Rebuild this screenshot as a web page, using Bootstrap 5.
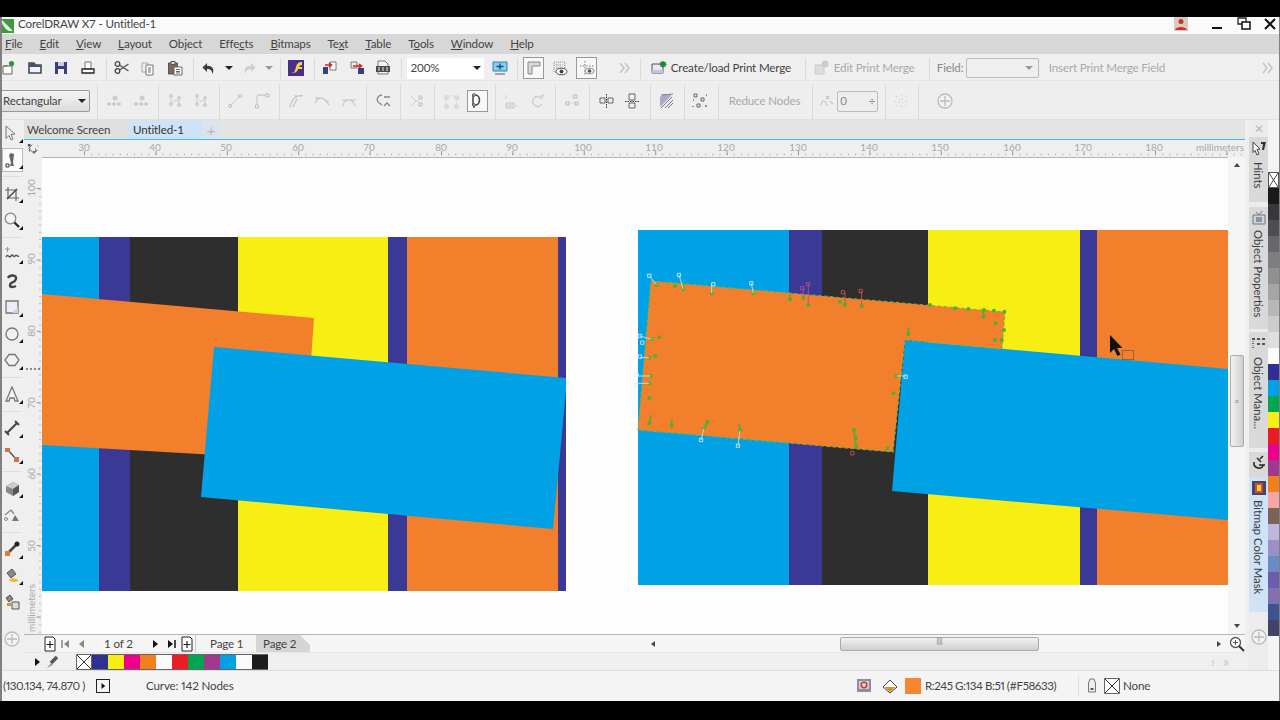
<!DOCTYPE html>
<html lang="en">
<head>
<meta charset="utf-8">
<title>CorelDRAW X7 - Untitled-1</title>
<link href="https://cdn.jsdelivr.net/npm/bootstrap@5.3.0/dist/css/bootstrap.min.css" rel="stylesheet">
<style>
html,body{margin:0;height:100%;background:#000;overflow:hidden}
body{font-family:Lato,"Liberation Sans",sans-serif;font-size:11.6px;letter-spacing:-.15px;color:#4a4a4a;line-height:1}
.cd-app{width:1280px;height:720px;background:#000}
.cd-black-top{height:17px;background:#000}
.cd-black-bot{height:19px;background:#000}
.cd-shell{position:relative}
.cd-shell::before{content:"";position:absolute;left:0;top:0;bottom:0;width:2px;background:#808080;z-index:2}
.cd-shell::after{content:"";position:absolute;right:0;top:0;bottom:0;width:1px;background:#808080;z-index:2}
.cd-title{height:17px;background:#fafafa;padding-bottom:3px}
.cd-logo{width:14px;height:14px;flex:none;display:block;margin-top:3px}
.cd-title-text{margin-left:4px;color:#444}
.cd-winbtns{padding-right:2px}
.cd-win-user{margin-right:20px}
.cd-win-min{margin-right:11px}
.cd-win-max{margin-right:10px}
.cd-menu{height:20px;background:#d7d7d7;gap:17px;padding-left:5px;color:#444}
.cd-toolbar{height:27px;background:#efefef;border-bottom:1px solid #e4e4e4;padding-top:2px}
.cd-prop{height:39px;background:#eeeeee;border-bottom:1px solid #e0e0e0;padding-top:2px}
.cd-slot{width:26.5px;height:24px;flex:none;display:flex;align-items:center;justify-content:center}
.cd-slot-first{width:21.5px;justify-content:flex-start}
.cd-slot-drop{width:13.5px}
.cd-pressed{position:relative}
.cd-pressed::before{content:"";position:absolute;left:3px;right:2.5px;top:1px;bottom:1px;border:1px solid #999;background:#f8f8f8}
.cd-pressed svg{position:relative}
.cd-ic{width:16px;height:16px;display:block}
.cd-sep{width:1px;height:100%;background:#dadada;margin:0 2px 0 4.5px;flex:none}
.cd-toolbar .cd-sep{height:21px}
.cd-prop .cd-sep{height:35px}
.cd-combo{width:77px;height:21px;background:#fff;border-radius:2px;margin-left:2.5px;display:flex;align-items:center;padding:0 3px 0 4px;justify-content:space-between;color:#444;flex:none}
.cd-caret{width:0;height:0;border-left:4px solid transparent;border-right:4px solid transparent;border-top:4px solid #222;flex:none}
.cd-caret-off{border-top-color:#999}
.cd-ml-zoom{margin-left:2.75px}
.cd-ml-more{margin-left:11.5px}
.cd-sep-tight{margin-left:2px;margin-right:10px}
.cd-create{width:16px;margin-right:4px;flex:none}
.cd-btn-text{white-space:nowrap;flex:none;color:#444}
.cd-create-text{width:120px}
.cd-off{color:#a9a9a9}
.cd-edit-ic{margin-right:4px;flex:none}
.cd-edit-text{width:81px}
.cd-sep-edit{margin-left:14px;margin-right:7px}
.cd-sep-edit2{margin-right:8px}
.cd-field{width:29px;color:#888}
.cd-fieldbox{width:73px;height:20px;border:1px solid #bbb;border-radius:2px;margin-right:10px;display:flex;align-items:center;justify-content:flex-end;padding-right:5px;flex:none}
.cd-field-text{width:206px}
.cd-shape-combo{width:90px;height:22px;background:linear-gradient(#f5f5f5,#dcdcdc);border:1px solid #9a9a9a;border-left:0;border-radius:2px;display:flex;align-items:center;justify-content:space-between;padding:0 3px 0 3px;color:#444;flex:none}
.cd-sep-first{margin-left:7px;margin-right:2.75px}
.cd-reduce{width:71px;margin-left:8px}
.cd-sep-red{margin-left:12px;margin-right:0}
.cd-spin{width:41px;height:21px;border:1px solid #bbb;border-radius:2px;display:flex;align-items:center;justify-content:space-between;padding:0 2px 0 2px;color:#888;flex:none;margin-left:-2px}
.cd-sep-spin{margin-left:7px;margin-right:1px}
.cd-plus-slot{margin-left:10px}
.cd-tools{width:24px;background:#efefef;flex:none}
.cd-tool{height:26.5px;flex:none;display:flex;align-items:center;justify-content:center;position:relative;padding:0 2px 0 2px}
.cd-corner::after{content:"";position:absolute;right:1px;bottom:4px;border-left:4px solid transparent;border-bottom:4px solid #111}
.cd-tool-on::before{content:"";position:absolute;left:2px;right:1px;top:1px;bottom:1px;border:1px solid #bbb;background:#fbfbfb}
.cd-tool svg{position:relative}
.cd-hsep{height:1px;background:#ddd;margin:3px 2px 3.5px 2px;flex:none}
.cd-tool-gap{height:10px;flex:none}
.cd-main{width:1225px;flex:none;background:#efefef}
.cd-tabs{height:20px;background:#e4e4e4;border-bottom:1px solid #3cc0dc;margin-right:4px;flex:none}
.cd-tab-a{width:105px;padding-left:3px;color:#444;background:#e0e0e0}
.cd-tab-b{width:73px;padding-left:4px;background:#cfe3f8;color:#333}
.cd-tab-c{width:18px;background:#dbe4ee;color:#bbb;font-size:16px;justify-content:center}
.cd-ruler-row{height:17px;flex:none}
.cd-ruler-svg{display:block}
.cd-rtext{font-family:Lato,"Liberation Sans",sans-serif;font-size:10px;letter-spacing:0;fill:#a8a8a8}
.cd-canvas-row{height:477px;flex:none}
.cd-vruler{width:18px;flex:none;background:#efefef}
.cd-canvas{width:1186px;flex:none;background:#fdfdfd;border-top:1px solid #b5b5b5;overflow:hidden}
.cd-canvas svg{display:block}
.cd-vscroll{width:17px;flex:none;background:#f5f5f5;padding:6px 0}
.cd-arrow-u{width:0;height:0;border-left:3.5px solid transparent;border-right:3.5px solid transparent;border-bottom:4px solid #444}
.cd-arrow-d{width:0;height:0;border-left:3.5px solid transparent;border-right:3.5px solid transparent;border-top:4px solid #444}
.cd-vthumb{width:14px;height:92px;margin:188px 0 177px 0;background:linear-gradient(90deg,#f2f2f2,#cfcfcf);border:1px solid #aaa;border-radius:2px;color:#777;font-size:7px}
.cd-page-row{height:18px;flex:none;background:#f5f5f5;border-top:1px solid #b5b5b5;margin-right:4px}
.cd-pg-left{width:18px;background:#efefef;flex:none;color:#aaa;height:100%}
.cd-pg-ic{width:16px;height:16px;flex:none;display:flex;align-items:center;justify-content:center}
.cd-pg-count{width:57px;text-align:center;color:#444;flex:none}
.cd-pg-tab{height:17px;display:flex;align-items:center;flex:none;color:#444;padding-left:14px}
.cd-pg-t1{width:61px;background:#f4f4f4;border-left:1px solid #ccc;clip-path:polygon(0 0,86% 0,100% 60%,100% 100%,0 100%)}
.cd-pg-t2{width:54px;background:#d5d5d5;padding-left:7px;clip-path:polygon(0 0,82% 0,100% 60%,100% 100%,0 100%)}
.cd-hscroll{flex:1 1 auto;height:100%;background:#f5f5f5;padding-left:341px}
.cd-arrow-l{width:0;height:0;border-top:3.5px solid transparent;border-bottom:3.5px solid transparent;border-right:4px solid #444;flex:none}
.cd-arrow-r{width:0;height:0;border-top:3.5px solid transparent;border-bottom:3.5px solid transparent;border-left:4px solid #444;flex:none}
.cd-hthumb{width:199px;height:14px;flex:none;background:linear-gradient(#f2f2f2,#cfcfcf);border:1px solid #aaa;border-radius:2px;color:#777;font-size:7px;text-align:center;margin-left:185px;margin-right:178px}
.cd-zoom-btn{margin-left:8px;flex:none}
.cd-pal-row{height:18px;flex:none;margin-right:4px;background:#efefef;border-top:1px solid #e6e6e6}
.cd-pal-head{width:52px;flex:none;padding-left:5px;gap:0}
.cd-sw{width:16px;height:16px;flex:none;border-top:1px solid #666;border-bottom:1px solid #666}
.cd-pal-fill{flex:1 1 auto;justify-content:flex-end;padding-right:16px;gap:8px}
.cd-chev{color:#c8c8c8;font-size:15px}
.cd-c1{background:#2e3192}.cd-c2{background:#f7ee14}.cd-c3{background:#ec008c}.cd-c4{background:#f17f1c}.cd-c5{background:#fafafa}.cd-c6{background:#ed1c24}.cd-c7{background:#00a651}.cd-c8{background:#a3398e}.cd-c9{background:#00a2e5}.cd-c10{background:#fafafa}.cd-c11{background:#1c1c1e}
.cd-dock{width:19px;flex:none;background:#ececec}
.cd-dock-x{height:17px;flex:none;color:#bbb;font-size:12px}
.cd-dtab{flex:none;writing-mode:vertical-rl;background:#d9d9d9;color:#3b3b3b;font-size:11.3px;letter-spacing:0;display:flex;flex-direction:row;align-items:center;padding-top:3px;gap:4px;white-space:nowrap}
.cd-dtab svg{writing-mode:horizontal-tb}
.cd-dt1{height:65px;gap:6px}
.cd-dt2{height:122px;margin-top:5px}
.cd-dt3{height:116px;margin-top:3px;gap:6px}
.cd-dt4{height:25px;margin-top:4px}
.cd-dt5{height:135px;background:#cfe2f6}
.cd-dock-plus{margin-top:17px}
.cd-pal{width:11px;flex:none;background:#f4f4f4}
.cd-pal-top{height:52px;flex:none}
.cd-pc{height:16px;flex:none;display:block}
.cd-g1{background:#1a1a1c}.cd-g2{background:#38383c}.cd-g3{background:#4c4e52}.cd-g4{background:#66686c}.cd-g5{background:#7c7e80}.cd-g6{background:#8e9092}.cd-g7{background:#a4a6a6}.cd-g8{background:#b6b8b8}.cd-g9{background:#cbcccc}.cd-g10{background:#dedede}.cd-g11{background:#fbfbfb}.cd-g12{background:#2e3192}
.cd-h1{background:#00a2e5}.cd-h2{background:#00a651}.cd-h3{background:#f7ee14}.cd-h4{background:#ed1c24}.cd-h5{background:#ec008c}.cd-h6{background:#a3398e}.cd-h7{background:#f17f1c}.cd-h8{background:#f4a5a5}.cd-h9{background:#7d6357}.cd-h10{background:#bfb6dc}.cd-h11{background:#9a8fc8}.cd-h12{background:#6a8cc4}.cd-h13{background:#6c5cae}.cd-h14{background:#8470b0}.cd-h15{background:#3c5590}.cd-h16{background:#43436a}
.cd-status{height:31px;background:#f4f4f4;border-top:1px solid #dcdcdc;color:#444;padding-left:3px;white-space:nowrap}
.cd-coords{width:93px;flex:none;letter-spacing:-.45px;font-variant-numeric:proportional-nums}
.cd-playbox{width:14px;height:14px;border:1px solid #222;display:flex;align-items:center;justify-content:center;flex:none;margin-right:36px}
.cd-curve{width:100px;flex:none;margin-right:610px;font-variant-numeric:proportional-nums}
.cd-st-ic{flex:none}
.cd-fillic{margin-left:10px;margin-right:7px}
.cd-orange{width:16px;height:16px;background:#f58633;flex:none;margin-right:4px}
.cd-rgb{width:131px;flex:none;letter-spacing:-.45px;font-variant-numeric:proportional-nums}
.cd-st-sep{width:1px;height:20px;background:#ddd;margin:0 5px 0 22px;flex:none}
.cd-xbox{width:16px;height:16px;margin:0 3px 0 4px;flex:none;display:block}
</style>
</head>
<body>
<svg width="0" height="0" class="d-none">
<defs>
<symbol id="x-new" viewBox="0 0 16 16"><path d="M3 6h9v8H3z" fill="#fff" stroke="#666"/><path d="M3 6h4v-1" fill="none" stroke="#666"/><circle cx="11.5" cy="3.5" r="2.6" fill="#1f9d3a"/></symbol>
<symbol id="x-open" viewBox="0 0 16 16"><path d="M2 3h5l1.500 2H14v8H2z" fill="#f2f2f2" stroke="#3f4a5e" stroke-width="1.600"/><path d="M2 3h5l1.500 2H14v2H2z" fill="#46536b"/></symbol>
<symbol id="x-save" viewBox="0 0 16 16"><path d="M2 2h12v12H2z" fill="#3a3f7c"/><path d="M5 2h6v4H5z" fill="#c9cbdc"/><path d="M5 9h6v5H5z" fill="#eef"/></symbol>
<symbol id="x-print" viewBox="0 0 16 16"><path d="M5 2h6v7H5z" fill="#fff" stroke="#777"/><path d="M2 9h12v4H2z" fill="#fff" stroke="#222" stroke-width="1.300"/></symbol>
<symbol id="x-cut" viewBox="0 0 16 16"><circle cx="3.500" cy="4" r="2.300" fill="none" stroke="#444" stroke-width="1.300"/><circle cx="3.500" cy="11" r="2.300" fill="none" stroke="#444" stroke-width="1.300"/><path d="M5.500 5l9 6M5.500 10l9-6" stroke="#555" stroke-width="1.400"/></symbol>
<symbol id="x-copy" viewBox="0 0 16 16"><path d="M2 3h6v9H2z" fill="#eee" stroke="#aaa"/><path d="M6 5h7v10H6z" fill="#fff" stroke="#777"/><path d="M8 8h3M8 10h3M8 12h3" stroke="#666"/></symbol>
<symbol id="x-paste" viewBox="0 0 16 16"><path d="M1.500 3h9v11h-9z" fill="#7d6a55" stroke="#555"/><path d="M4 1.500h4v3H4z" fill="#ddd" stroke="#555"/><path d="M7 7h8v8H7z" fill="#fff" stroke="#666"/><path d="M9 9.500h4M9 11.500h4M9 13h4" stroke="#666"/></symbol>
<symbol id="x-undo" viewBox="0 0 16 16"><path d="M6 3L1.500 7.500 6 12V9c3 0 5 1 5.500 5C13.500 10 12 5.500 6 5.800z" fill="#3c3c3c"/></symbol>
<symbol id="x-redo" viewBox="0 0 16 16"><path d="M10 3l4.500 4.500L10 12V9c-3 0-5 1-5.500 5C2.500 10 4 5.500 10 5.800z" fill="#d0d0d0"/></symbol>
<symbol id="x-app" viewBox="0 0 16 16"><path d="M0 0h16v16H0z" fill="#4a2f8a"/><path d="M3 13c4 0 4-3 5-6 1-3 2-5 6-5v3c-2 0-2.500 1-3 2h3v2h-4c-1 3-2 4-7 4z" fill="#f3d64a"/></symbol>
<symbol id="x-imp" viewBox="0 0 16 16"><path d="M8 2h6v8H8z" fill="#fff" stroke="#777"/><path d="M1 7h5v7H1z" fill="#3a3f7c"/><path d="M3 5h6M7 3l2.500 2L7 7" stroke="#d22" stroke-width="1.600" fill="none"/></symbol>
<symbol id="x-exp" viewBox="0 0 16 16"><path d="M2 2h6v6H2z" fill="#eee" stroke="#777"/><path d="M9 8h6v6H9z" fill="#3a3f7c"/><path d="M4 6h8M10 4l2.500 2L10 8" stroke="#d22" stroke-width="1.600" fill="none"/></symbol>
<symbol id="x-pdf" viewBox="0 0 16 16"><path d="M3 1h7l3 3v10H3z" fill="#f4f4f4" stroke="#777"/><path d="M1 6h14v6H1z" fill="#4c4c4c"/><path d="M3 8h2M7 8h2M11 8h2M3 10h2M7 10h2M11 10h2" stroke="#eee"/></symbol>
<symbol id="x-fit" viewBox="0 0 16 16"><path d="M1 2h14v9H1z" fill="#7fd0ee" stroke="#3b7ea6"/><path d="M3 14h10" stroke="#889" stroke-width="1.500"/><path d="M8 3.500v6M4.500 6.500h7" stroke="#1a4d7a" stroke-width="1.300"/></symbol>
<symbol id="x-rul" viewBox="0 0 16 16"><path d="M2 2h12v4H6v8H2z" fill="#d9d9d9" stroke="#888"/></symbol>
<symbol id="x-grid" viewBox="0 0 16 16"><path d="M2 2h11v10H2z" fill="none" stroke="#999" stroke-dasharray="1 1"/><path d="M2 5h11M2 8h11M5 2v10M8 2v10" stroke="#aaa" stroke-dasharray="1 1"/><ellipse cx="9.500" cy="11.500" rx="5.500" ry="3.300" fill="#fff" stroke="#444"/><circle cx="9.500" cy="11.500" r="2" fill="#444"/></symbol>
<symbol id="x-guide" viewBox="0 0 16 16"><path d="M6 1v14M1 6h14" stroke="#777" stroke-dasharray="1.500 1.500"/><ellipse cx="10.500" cy="11" rx="4.500" ry="2.800" fill="#eee" stroke="#888"/><circle cx="10.500" cy="11" r="1.800" fill="#555"/></symbol>
<symbol id="x-more" viewBox="0 0 16 16"><path d="M3 3l4 5-4 5M8 3l4 5-4 5" fill="none" stroke="#c4c4c4" stroke-width="1.500"/></symbol>
<symbol id="x-create" viewBox="0 0 16 16"><path d="M1 4h11v9H1z" fill="#e9e6f4" stroke="#555"/><path d="M1 10h11v3H1z" fill="#c8c3de"/><path d="M12 .500l1 1.500 1.800-.5-.3 1.800 1.500 1-1.500 1 .3 1.800-1.800-.5-1 1.500-1-1.500-1.800.5.300-1.800-1.500-1 1.500-1-.3-1.800 1.800.5z" fill="#1b8a34"/></symbol>
<symbol id="x-edit" viewBox="0 0 16 16"><path d="M1 5h9v9H1z" fill="#ddd" stroke="#ccc"/><circle cx="11" cy="4" r="3.500" fill="#ccc"/></symbol>
<symbol id="x-n1" viewBox="0 0 16 16"><circle cx="9" cy="5" r="2.500" fill="#ccc"/><path d="M1 11h14" stroke="#ccc" stroke-dasharray="1.500 1.500"/><circle cx="3" cy="11" r="1.200" fill="none" stroke="#bbb"/><circle cx="8" cy="11" r="1.200" fill="none" stroke="#bbb"/><circle cx="13" cy="11" r="1.200" fill="none" stroke="#bbb"/></symbol>
<symbol id="x-n2" viewBox="0 0 16 16"><path d="M4 1v13M12 3v11M6 8h5" stroke="#ccc"/><circle cx="4" cy="3" r="1.300" fill="#f5f5f5" stroke="#bbb"/><circle cx="4" cy="11" r="1.300" fill="#f5f5f5" stroke="#bbb"/><circle cx="12" cy="5" r="1.300" fill="#f5f5f5" stroke="#bbb"/><circle cx="12" cy="12" r="1.300" fill="#f5f5f5" stroke="#bbb"/></symbol>
<symbol id="x-n3" viewBox="0 0 16 16"><path d="M3 13L13 3" stroke="#ccc"/><circle cx="3" cy="13" r="1.500" fill="#f5f5f5" stroke="#bbb"/><circle cx="13" cy="3" r="1.500" fill="#f5f5f5" stroke="#bbb"/></symbol>
<symbol id="x-n4" viewBox="0 0 16 16"><path d="M3 14V4c0-1 1-2 2-2h10" fill="none" stroke="#ccc" stroke-width="1.300"/><path d="M1.500 12h3v3h-3zM12 1h3v3h-3z" fill="#f5f5f5" stroke="#bbb"/></symbol>
<symbol id="x-n5" viewBox="0 0 16 16"><path d="M2 14C4 6 7 3 14 2M6 3h9M9 6l-4 8" fill="none" stroke="#c4c4c4" stroke-width="1.200"/></symbol>
<symbol id="x-n6" viewBox="0 0 16 16"><path d="M1 10C5 2 10 4 15 12M1 5h4M11 8h4" fill="none" stroke="#c4c4c4" stroke-width="1.200"/></symbol>
<symbol id="x-n7" viewBox="0 0 16 16"><path d="M2 13C3 5 12 5 14 13M1 7h14" fill="none" stroke="#c4c4c4" stroke-width="1.200"/></symbol>
<symbol id="x-n8" viewBox="0 0 16 16"><path d="M7 2C3 2 1 6 3 9l4 3M9 13l3-3 3 3M9 4h6" fill="none" stroke="#888" stroke-width="1.300"/></symbol>
<symbol id="x-n9" viewBox="0 0 16 16"><path d="M2 3l5 5-5 5M7 8h3" stroke="#ccc" fill="none"/><path d="M10 3h3v3h-3zM10 10h3v3h-3z" fill="none" stroke="#bbb"/></symbol>
<symbol id="x-n10" viewBox="0 0 16 16"><path d="M2 3h3v3H2zM12 3h3v3h-3zM2 12h3v3H2zM12 12h3v3h-3z" fill="#e9e9e9" stroke="#ccc"/><path d="M3 6v6M6 3h5M14 6v6" stroke="#ccc" stroke-dasharray="1 1"/></symbol>
<symbol id="x-n11" viewBox="0 0 16 16"><path d="M4 2h2c6 0 6 10 0 10H4z M5 12v3" fill="none" stroke="#444" stroke-width="1.500"/><circle cx="5" cy="2" r="1.300" fill="#fff" stroke="#444"/><circle cx="5" cy="12" r="1.300" fill="#fff" stroke="#444"/></symbol>
<symbol id="x-n12" viewBox="0 0 16 16"><path d="M3 2v4M3 10h8v5H3z" fill="#ddd" stroke="#ccc"/><path d="M12 13h3" stroke="#ccc"/></symbol>
<symbol id="x-n13" viewBox="0 0 16 16"><path d="M12 6a5 5 0 1 0 0 5" fill="none" stroke="#ccc" stroke-width="1.400"/><path d="M10 3l4-2-1 4z" fill="#ccc"/></symbol>
<symbol id="x-n14" viewBox="0 0 16 16"><path d="M9 1v6M1 10h14" stroke="#ccc" stroke-dasharray="1.500 1.500"/><path d="M10 2h3v3h-3zM2 9h3v3H2zM11 9h3v3h-3z" fill="none" stroke="#bbb"/></symbol>
<symbol id="x-n15" viewBox="0 0 16 16"><path d="M2 5h5v5H2zM10 5h5v5h-5z" fill="none" stroke="#666"/><path d="M8.500 1v14" stroke="#333" stroke-dasharray="1.500 1"/></symbol>
<symbol id="x-n16" viewBox="0 0 16 16"><path d="M5 1h6v6H5zM5 10h6v5H5z" fill="none" stroke="#666"/><path d="M1 8.500h14" stroke="#333" stroke-dasharray="1.500 1"/></symbol>
<symbol id="x-n17" viewBox="0 0 16 16"><path d="M4 1h9v2l-11 11V4z" fill="#a9a9c9"/><path d="M14 4L3 15M15 7l-8 8M15 10l-5 5" stroke="#777"/><path d="M4 2l11-1" stroke="#888"/></symbol>
<symbol id="x-n18" viewBox="0 0 16 16"><path d="M2 1h3v3H2zM9 5h3v3H9zM5 11h3v3H5z" fill="none" stroke="#666"/><path d="M1 7h1M14 2h1M14 12v2M1 13v1" stroke="#333"/></symbol>
<symbol id="x-n19" viewBox="0 0 16 16"><path d="M2 12c3-1 1-4 4-4s1 5 4 4M8 3l3 3M11 3L8 6M12 8l3 3" fill="none" stroke="#c4c4c4" stroke-width="1.100"/></symbol>
<symbol id="x-n20" viewBox="0 0 16 16"><g fill="#c8c8c8"><path d="M6 6h1v1H6zM9 6h1v1H9zM6 9h1v1H6zM9 9h1v1H9zM3 3h1v1H3zM8 2h1v1H8zM12 3h1v1h-1zM2 8h1v1H2zM13 8h1v1h-1zM3 12h1v1H3zM8 13h1v1H8zM12 12h1v1h-1z"/></g></symbol>
<symbol id="x-plus" viewBox="0 0 16 16"><circle cx="8" cy="8" r="7" fill="#f3f3f3" stroke="#bbb" stroke-width="1.300"/><path d="M8 3v10M3 8h10" stroke="#bbb" stroke-width="1.300"/></symbol>
<symbol id="x-pick" viewBox="0 0 16 16"><path d="M2 1l9 8-4 .5L9 14l-2 1-2-4.500-3 3z" fill="#eee" stroke="#777"/></symbol>
<symbol id="x-shape" viewBox="0 0 16 16"><path d="M7 1l3 1-1 9 1 3H6l1-3-2-8z" fill="#666"/><path d="M2 12h3v3H2z" fill="#fff" stroke="#333"/></symbol>
<symbol id="x-crop" viewBox="0 0 16 16"><path d="M4 1v11h11M1 4h11v11" fill="none" stroke="#666" stroke-width="1.200"/><path d="M3 13L13 3" stroke="#444" stroke-width="1.500"/></symbol>
<symbol id="x-zoom" viewBox="0 0 16 16"><circle cx="6.500" cy="6.500" r="5.300" fill="#f5f5f5" stroke="#888" stroke-width="1.300"/><path d="M10.500 10.500l4.500 4.500" stroke="#222" stroke-width="2.200"/></symbol>
<symbol id="x-free" viewBox="0 0 16 16"><path d="M1 3h5M3.500 1v5" stroke="#999"/><path d="M2 11c2-4 3 2 5-1s2 2 4 0 2 1 4 0" fill="none" stroke="#555" stroke-width="1.500"/></symbol>
<symbol id="x-art" viewBox="0 0 16 16"><path d="M4 5c2-4 9-3 8 1s-6 3-6 6 4 2 6 1" fill="none" stroke="#444" stroke-width="2.400"/></symbol>
<symbol id="x-rect" viewBox="0 0 16 16"><path d="M2 2h12v12H2z" fill="#ededf5" stroke="#777" stroke-width="1.300"/><path d="M8 14h6V8z" fill="#cfcfe0"/></symbol>
<symbol id="x-ell" viewBox="0 0 16 16"><circle cx="8" cy="8" r="6" fill="#f0f0f6" stroke="#777" stroke-width="1.300"/></symbol>
<symbol id="x-poly" viewBox="0 0 16 16"><path d="M5 2.500h6L15 8l-4 5.500H5L1 8z" fill="#f0f0f6" stroke="#777" stroke-width="1.300"/></symbol>
<symbol id="x-text" viewBox="0 0 16 16"><path d="M8 1L2 15h3l1-3h4l1 3h3z" fill="#f4f4f4" stroke="#777" stroke-width="1.300"/></symbol>
<symbol id="x-dim" viewBox="0 0 16 16"><path d="M3 13L13 3" stroke="#444" stroke-width="2"/><path d="M1 11l4 4M11 1l4 4" stroke="#444" stroke-width="1.800"/></symbol>
<symbol id="x-conn" viewBox="0 0 16 16"><path d="M4 3l8 9" stroke="#555" stroke-width="1.500"/><path d="M1 1h5v4H1z" fill="#d4704a"/><path d="M10 10h5v5h-5z" fill="#d4704a"/></symbol>
<symbol id="x-shadow" viewBox="0 0 16 16"><path d="M2 5l7-4 6 3v7l-6 4-7-4z" fill="#888"/><path d="M2 5l7 3 6-4-6-3z" fill="#ccc"/><path d="M9 8v7l6-4V4z" fill="#555"/></symbol>
<symbol id="x-trans" viewBox="0 0 16 16"><path d="M1 8l6-5M7 3l3 4" stroke="#888" stroke-width="1.300" fill="none"/><circle cx="2" cy="12" r="1.500" fill="none" stroke="#888"/><path d="M8 14l3-6 4 6z" fill="#777"/></symbol>
<symbol id="x-drop" viewBox="0 0 16 16"><path d="M13 3L5 11" stroke="#444" stroke-width="2.500"/><circle cx="13" cy="3" r="2.500" fill="#222"/><path d="M1 10h5v5H1z" fill="#d9822b"/></symbol>
<symbol id="x-fill" viewBox="0 0 16 16"><path d="M3 5l5-4 4 5-5 4z" fill="#888" stroke="#555"/><path d="M5 12c2-2 7-2 9 0s-7 3-9 0z" fill="#f2b632"/></symbol>
<symbol id="x-smart" viewBox="0 0 16 16"><path d="M2 4l4-3 3 4-4 3z" fill="#888" stroke="#555"/><path d="M3 9h4v3H3z" fill="#e08a2c"/><path d="M8 8h7v7H8z" fill="#ddd" stroke="#555"/></symbol>
<symbol id="x-corner" viewBox="0 0 16 16"><path d="M3 6v4M10 6v4M6 2l-4 4 6 6 4-4M12 3l1 1" stroke="#555" fill="none"/><path d="M1 1h3v3H1zM7 9h2v2H7z" fill="#555"/></symbol>
<symbol id="x-hint" viewBox="0 0 16 16"><path d="M2 2l7 7-3 .5 2 4.500-2 1-2-4.500-2 2z" fill="#f3f3f3" stroke="#444"/><path d="M10 2h5l-2 8h-2l1-6h-2z" fill="#333"/></symbol>
<symbol id="x-props" viewBox="0 0 16 16"><path d="M2 5h12v9H2z" fill="#cfd4da" stroke="#777"/><path d="M5 2l3 3 3-4" stroke="#777" fill="none"/><path d="M5 7h6v5H5z" fill="#8a93a0"/></symbol>
<symbol id="x-mana" viewBox="0 0 16 16"><path d="M1 3h3v2H1zM6 3h3v2H6zM11 3h3v2h-3zM6 8h3v2H6zM11 8h3v2h-3zM1 8h2v1H1zM1 12h2v1H1z" fill="#555"/><path d="M2 6v8" stroke="#777" stroke-dasharray="1 1"/></symbol>
<symbol id="x-grab" viewBox="0 0 16 16"><path d="M3 7c-1 7 9 8 9 3M6 3l4 4M12 1l-3 3M8 10h6" fill="none" stroke="#222" stroke-width="1.500"/></symbol>
<symbol id="x-mask" viewBox="0 0 16 16"><path d="M1 1h14v14H1z" fill="#3c4a6e"/><path d="M4 3h8v10H4z" fill="#d9482b"/><path d="M6 5h4v6H6z" fill="#f6dc3a"/></symbol>
<symbol id="x-eye" viewBox="0 0 16 16"><path d="M12 3L6 9" stroke="#555" stroke-width="3.500"/><path d="M2 14l4-5 2 2z" fill="#999"/></symbol>
<symbol id="x-zplus" viewBox="0 0 16 16"><circle cx="6.500" cy="6.500" r="5" fill="#fff" stroke="#555" stroke-width="1.300"/><path d="M4 6.500h5M6.500 4v5" stroke="#555"/><path d="M10 10l5 5" stroke="#333" stroke-width="2"/></symbol>
<symbol id="x-screen" viewBox="0 0 16 16"><path d="M1 1h14v13H1z" fill="#8b8fa1"/><path d="M3 3h10v8H3z" fill="#d5c9cf"/><circle cx="8" cy="7" r="2.800" fill="none" stroke="#c33" stroke-width="1.300"/></symbol>
<symbol id="x-bucket" viewBox="0 0 16 16"><path d="M1 9l7-7 7 7-7 6z" fill="#fff" stroke="#444"/><path d="M2.500 9h11L8 14z" fill="#e08a2c"/></symbol>
<symbol id="x-pen" viewBox="0 0 16 16"><path d="M6 1h4l1.500 4v9h-7V5z" fill="#eee" stroke="#777"/><path d="M6.500 11h3" stroke="#555" stroke-width="2"/></symbol>
<symbol id="x-x" viewBox="0 0 16 16"><path d="M.5.500h15v15H.500z" fill="#fff" stroke="#666"/><path d="M1 1l14 14M15 1L1 15" stroke="#333"/></symbol>
<symbol id="x-pgadd" viewBox="0 0 16 16"><path d="M3 1h8l2 2v12H3z" fill="#fff" stroke="#222"/><path d="M8 5v7M4.500 8.500h7" stroke="#222" stroke-width="1.200"/></symbol>
<symbol id="x-first" viewBox="0 0 16 16"><path d="M4 4v8" stroke="#888" stroke-width="1.500"/><path d="M11 4v8L6 8z" fill="#888"/></symbol>
<symbol id="x-prev" viewBox="0 0 16 16"><path d="M10 4v8L5 8z" fill="#888"/></symbol>
<symbol id="x-next" viewBox="0 0 16 16"><path d="M6 4v8l5-4z" fill="#111"/></symbol>
<symbol id="x-last" viewBox="0 0 16 16"><path d="M12 4v8" stroke="#111" stroke-width="1.500"/><path d="M5 4v8l5-4z" fill="#111"/></symbol>
<symbol id="x-user" viewBox="0 0 16 16"><path d="M1 1h14v14H1z" fill="#dcc9c6"/><circle cx="8" cy="5.500" r="2.500" fill="#c8381e"/><path d="M2 14c1-4 11-4 12 0z" fill="#c8381e"/></symbol>
<symbol id="x-logo" viewBox="0 0 14 14"><path d="M0 0h14v14H0z" fill="#3f9a3c"/><path d="M1 0l12 12h-4C5 10 2 6 1 0z" fill="#e8f4e0"/></symbol>
</defs>
</svg>

<div class="cd-app d-flex flex-column">
  <div class="cd-black-top"></div>
  <div class="cd-shell d-flex flex-column flex-grow-1">
    <div class="cd-title d-flex align-items-center">
      <svg class="cd-logo"><use href="#x-logo"/></svg>
      <span class="cd-title-text">CorelDRAW X7 - Untitled-1</span>
      <span class="ms-auto d-flex align-items-center cd-winbtns">
        <svg class="cd-ic cd-win-user"><use href="#x-user"/></svg>
        <svg class="cd-ic cd-win-min" viewBox="0 0 16 16"><path d="M3 12h10" stroke="#111" stroke-width="2"/></svg>
        <svg class="cd-ic cd-win-max" viewBox="0 0 16 16"><path d="M2 2h8v6H2z" fill="none" stroke="#222" stroke-width="1.300"/><path d="M6 6h8v7H6z" fill="#fff" stroke="#111" stroke-width="1.500"/></svg>
        <svg class="cd-ic" viewBox="0 0 16 16"><path d="M3 3l10 10M13 3L3 13" stroke="#111" stroke-width="2"/></svg>
      </span>
    </div>
    <div class="cd-menu d-flex align-items-center">
      <span><u>F</u>ile</span><span><u>E</u>dit</span><span><u>V</u>iew</span><span><u>L</u>ayout</span><span>Ob<u>j</u>ect</span><span>Effe<u>c</u>ts</span><span><u>B</u>itmaps</span><span>Te<u>x</u>t</span><span><u>T</u>able</span><span>T<u>o</u>ols</span><span><u>W</u>indow</span><span><u>H</u>elp</span>
    </div>
    <div class="cd-toolbar d-flex align-items-center">
      <span class="cd-slot cd-slot-first"><svg class="cd-ic"><use href="#x-new"/></svg></span>
      <span class="cd-slot"><svg class="cd-ic"><use href="#x-open"/></svg></span>
      <span class="cd-slot"><svg class="cd-ic"><use href="#x-save"/></svg></span>
      <span class="cd-slot"><svg class="cd-ic"><use href="#x-print"/></svg></span>
      <span class="cd-sep"></span>
      <span class="cd-slot"><svg class="cd-ic"><use href="#x-cut"/></svg></span>
      <span class="cd-slot"><svg class="cd-ic"><use href="#x-copy"/></svg></span>
      <span class="cd-slot"><svg class="cd-ic"><use href="#x-paste"/></svg></span>
      <span class="cd-sep"></span>
      <span class="cd-slot"><svg class="cd-ic"><use href="#x-undo"/></svg></span>
      <span class="cd-slot cd-slot-drop"><span class="cd-caret"></span></span>
      <span class="cd-slot"><svg class="cd-ic"><use href="#x-redo"/></svg></span>
      <span class="cd-slot cd-slot-drop"><span class="cd-caret cd-caret-off"></span></span>
      <span class="cd-sep"></span>
      <span class="cd-slot"><svg class="cd-ic"><use href="#x-app"/></svg></span>
      <span class="cd-sep"></span>
      <span class="cd-slot"><svg class="cd-ic"><use href="#x-imp"/></svg></span>
      <span class="cd-slot"><svg class="cd-ic"><use href="#x-exp"/></svg></span>
      <span class="cd-slot"><svg class="cd-ic"><use href="#x-pdf"/></svg></span>
      <span class="cd-sep"></span>
      <span class="cd-combo"><span>200%</span><span class="cd-caret"></span></span>
      <span class="cd-slot cd-ml-zoom"><svg class="cd-ic"><use href="#x-fit"/></svg></span>
      <span class="cd-sep"></span>
      <span class="cd-slot cd-pressed"><svg class="cd-ic"><use href="#x-rul"/></svg></span>
      <span class="cd-slot"><svg class="cd-ic"><use href="#x-grid"/></svg></span>
      <span class="cd-slot cd-pressed"><svg class="cd-ic"><use href="#x-guide"/></svg></span>
      <span class="cd-slot cd-ml-more"><svg class="cd-ic"><use href="#x-more"/></svg></span>
      <span class="cd-sep cd-sep-tight"></span>
      <svg class="cd-ic cd-create"><use href="#x-create"/></svg>
      <span class="cd-btn-text cd-create-text">Create/load Print Merge</span>
      <span class="cd-sep cd-sep-edit cd-sep-edit2"></span>
      <svg class="cd-ic cd-edit-ic"><use href="#x-edit"/></svg>
      <span class="cd-btn-text cd-off cd-edit-text">Edit Print Merge</span>
      <span class="cd-sep cd-sep-edit"></span>
      <span class="cd-btn-text cd-field">Field:</span>
      <span class="cd-fieldbox"><span class="cd-caret cd-caret-off"></span></span>
      <span class="cd-btn-text cd-off cd-field-text">Insert Print Merge Field</span>
      <span class="cd-slot"><svg class="cd-ic"><use href="#x-more"/></svg></span>
    </div>
    <div class="cd-prop d-flex align-items-center">
      <span class="cd-shape-combo"><span>Rectangular</span><span class="cd-caret"></span></span>
      <span class="cd-sep cd-sep-first"></span>
      <span class="cd-slot"><svg class="cd-ic"><use href="#x-n1"/></svg></span>
      <span class="cd-slot"><svg class="cd-ic"><use href="#x-n1"/></svg></span>
      <span class="cd-sep"></span>
      <span class="cd-slot"><svg class="cd-ic"><use href="#x-n2"/></svg></span>
      <span class="cd-slot"><svg class="cd-ic"><use href="#x-n2"/></svg></span>
      <span class="cd-sep"></span>
      <span class="cd-slot"><svg class="cd-ic"><use href="#x-n3"/></svg></span>
      <span class="cd-slot"><svg class="cd-ic"><use href="#x-n4"/></svg></span>
      <span class="cd-sep"></span>
      <span class="cd-slot"><svg class="cd-ic"><use href="#x-n5"/></svg></span>
      <span class="cd-slot"><svg class="cd-ic"><use href="#x-n6"/></svg></span>
      <span class="cd-slot"><svg class="cd-ic"><use href="#x-n7"/></svg></span>
      <span class="cd-sep"></span>
      <span class="cd-slot"><svg class="cd-ic"><use href="#x-n8"/></svg></span>
      <span class="cd-sep"></span>
      <span class="cd-slot"><svg class="cd-ic"><use href="#x-n9"/></svg></span>
      <span class="cd-sep"></span>
      <span class="cd-slot"><svg class="cd-ic"><use href="#x-n10"/></svg></span>
      <span class="cd-slot cd-pressed"><svg class="cd-ic"><use href="#x-n11"/></svg></span>
      <span class="cd-sep"></span>
      <span class="cd-slot"><svg class="cd-ic"><use href="#x-n12"/></svg></span>
      <span class="cd-slot"><svg class="cd-ic"><use href="#x-n13"/></svg></span>
      <span class="cd-sep"></span>
      <span class="cd-slot"><svg class="cd-ic"><use href="#x-n14"/></svg></span>
      <span class="cd-sep"></span>
      <span class="cd-slot"><svg class="cd-ic"><use href="#x-n15"/></svg></span>
      <span class="cd-slot"><svg class="cd-ic"><use href="#x-n16"/></svg></span>
      <span class="cd-sep"></span>
      <span class="cd-slot"><svg class="cd-ic"><use href="#x-n17"/></svg></span>
      <span class="cd-sep"></span>
      <span class="cd-slot"><svg class="cd-ic"><use href="#x-n18"/></svg></span>
      <span class="cd-sep"></span>
      <span class="cd-btn-text cd-off cd-reduce">Reduce Nodes</span>
      <span class="cd-sep cd-sep-red"></span>
      <span class="cd-slot"><svg class="cd-ic"><use href="#x-n19"/></svg></span>
      <span class="cd-spin"><span>0</span><span>&#247;</span></span>
      <span class="cd-sep cd-sep-spin"></span>
      <span class="cd-slot"><svg class="cd-ic"><use href="#x-n20"/></svg></span>
      <span class="cd-sep"></span>
      <span class="cd-slot cd-plus-slot"><svg class="cd-ic"><use href="#x-plus"/></svg></span>
    </div>

    <div class="d-flex flex-grow-1">
      <div class="cd-tools d-flex flex-column">
        <span class="cd-tool cd-corner"><svg class="cd-ic"><use href="#x-pick"/></svg></span>
        <span class="cd-tool cd-corner cd-tool-on"><svg class="cd-ic"><use href="#x-shape"/></svg></span>
        <span class="cd-hsep"></span>
        <span class="cd-tool cd-corner"><svg class="cd-ic"><use href="#x-crop"/></svg></span>
        <span class="cd-tool cd-corner"><svg class="cd-ic"><use href="#x-zoom"/></svg></span>
        <span class="cd-hsep"></span>
        <span class="cd-tool cd-corner"><svg class="cd-ic"><use href="#x-free"/></svg></span>
        <span class="cd-tool"><svg class="cd-ic"><use href="#x-art"/></svg></span>
        <span class="cd-tool cd-corner"><svg class="cd-ic"><use href="#x-rect"/></svg></span>
        <span class="cd-tool cd-corner"><svg class="cd-ic"><use href="#x-ell"/></svg></span>
        <span class="cd-tool cd-corner"><svg class="cd-ic"><use href="#x-poly"/></svg></span>
        <span class="cd-hsep"></span>
        <span class="cd-tool cd-corner"><svg class="cd-ic"><use href="#x-text"/></svg></span>
        <span class="cd-hsep"></span>
        <span class="cd-tool cd-corner"><svg class="cd-ic"><use href="#x-dim"/></svg></span>
        <span class="cd-tool cd-corner"><svg class="cd-ic"><use href="#x-conn"/></svg></span>
        <span class="cd-hsep"></span>
        <span class="cd-tool cd-corner"><svg class="cd-ic"><use href="#x-shadow"/></svg></span>
        <span class="cd-tool"><svg class="cd-ic"><use href="#x-trans"/></svg></span>
        <span class="cd-hsep"></span>
        <span class="cd-tool cd-corner"><svg class="cd-ic"><use href="#x-drop"/></svg></span>
        <span class="cd-tool cd-corner"><svg class="cd-ic"><use href="#x-fill"/></svg></span>
        <span class="cd-tool"><svg class="cd-ic"><use href="#x-smart"/></svg></span>
        <span class="cd-tool-gap"></span>
        <span class="cd-tool"><svg class="cd-ic"><use href="#x-plus"/></svg></span>
      </div>

      <div class="cd-main d-flex flex-column">
        <div class="cd-tabs d-flex">
          <span class="cd-tab-a d-flex align-items-center">Welcome Screen</span>
          <span class="cd-tab-b d-flex align-items-center">Untitled-1</span>
          <span class="cd-tab-c d-flex align-items-center">+</span>
        </div>
        <div class="cd-ruler-row">
          <svg class="cd-ruler-svg" width="1225" height="17" viewBox="24 140 1225 17">
            <rect x="24" y="140" width="1225" height="17" fill="#efefef"/>
            <g transform="translate(27 143)"><use href="#x-corner" width="14" height="14"/></g>
            <path d="M84 154.500H1245" stroke="#aaa" stroke-width="1.500" stroke-dasharray="1 6.140"/>
            <path d="M84 153H1245" stroke="#999" stroke-width="4" stroke-dasharray="1 70.400"/>
            <g class="cd-rtext" text-anchor="middle">
              <text x="84" y="151">30</text><text x="155" y="151">40</text><text x="226" y="151">50</text><text x="298" y="151">60</text><text x="369" y="151">70</text><text x="441" y="151">80</text><text x="512" y="151">90</text><text x="583" y="151">100</text><text x="654" y="151">110</text><text x="726" y="151">120</text><text x="798" y="151">130</text><text x="869" y="151">140</text><text x="940" y="151">150</text><text x="1012" y="151">160</text><text x="1083" y="151">170</text><text x="1154" y="151">180</text><text x="1220" y="151">millimeters</text>
            </g>
          </svg>
        </div>
        <div class="cd-canvas-row d-flex">
          <div class="cd-vruler">
            <svg class="cd-ruler-svg" width="18" height="477" viewBox="24 157 18 477">
              <path d="M40 189V634" stroke="#aaa" stroke-width="1.500" stroke-dasharray="1 6.140"/>
              <path d="M38.500 188V634" stroke="#999" stroke-width="4" stroke-dasharray="1 70.400"/>
              <path d="M26 369H41" stroke="#222" stroke-dasharray="2 2"/>
              <g class="cd-rtext" text-anchor="middle">
                <text transform="translate(35 188) rotate(-90)">100</text>
                <text transform="translate(35 259) rotate(-90)">90</text>
                <text transform="translate(35 331) rotate(-90)">80</text>
                <text transform="translate(35 403) rotate(-90)">70</text>
                <text transform="translate(35 474) rotate(-90)">60</text>
                <text transform="translate(35 546) rotate(-90)">50</text>
                <text transform="translate(35 608) rotate(-90)">millimeters</text>
              </g>
            </svg>
          </div>
          <div class="cd-canvas">
            <svg width="1186" height="476" viewBox="42 158 1186 476">
              <path d="M42 237h57v354H42z" fill="#00a2e5"/>
              <path d="M99 237h31v354H99z" fill="#3a3a96"/>
              <path d="M130 237h108v354H130z" fill="#2e2e2e"/>
              <path d="M238 237h150v354H238z" fill="#f7ee14"/>
              <path d="M388 237h19v354H388z" fill="#3a3a96"/>
              <path d="M407 237h151v354H407z" fill="#f17f2c"/>
              <path d="M558 237h8v354H558z" fill="#3a3a96"/>
              <path d="M42 294L314 318 304 460 42 445z" fill="#f17f2c"/>
              <path d="M214 347L566 378 566 390 553 529 201 497z" fill="#00a2e5"/>
              <path d="M638 230h151v355H638z" fill="#00a2e5"/>
              <path d="M789 230h33v355H789z" fill="#3a3a96"/>
              <path d="M822 230h106v355H822z" fill="#2e2e2e"/>
              <path d="M928 230h152v355H928z" fill="#f7ee14"/>
              <path d="M1080 230h17v355H1080z" fill="#3a3a96"/>
              <path d="M1097 230h131v355H1097z" fill="#f17f2c"/>
              <path d="M905 340L1228 369V520L892 491z" fill="#00a2e5"/>
              <path d="M651 281L1005 312 1002 349 905 340 893 452 638 430z" fill="#f17f2c"/>
              <path d="M651 281L1005 312 1002 349 905 340 893 452 638 430z" fill="none" stroke="#6cb84a" stroke-width="1.200" stroke-dasharray="3 3"/>
              <g transform="translate(630 260) scale(.3333)">
                <path d="M80 75h.1M135 78h.1M160 88h.1M245 100h.1M370 100h.1M480 118h.1M520 115h.1M535 135h.1M630 125h.1M645 135h.1M695 138h.1M900 135h.1M975 145h.1M1015 147h.1M1060 170h.1M1097 190h.1M1122 210h.1M1095 240h.1M1115 240h.1M835 222h.1M800 348h.1M790 400h.1M672 510h.1M678 535h.1M678 558h.1M772 565h.1M330 512h.1M232 485h.1M222 505h.1M125 497h.1M58 490h.1M58 415h.1M58 370h.1M62 348h.1M58 293h.1M76 288h.1M65 238h.1M88 232h.1M1062 150h.1M1092 152h.1M1123 155h.1" stroke="#4fb031" stroke-width="12" stroke-linecap="round" fill="none"/>
                <path d="M160 88v-20M245 100v-20M480 118v-15M645 135v-20M1060 170v-20M835 222v-20M58 490l5-25M125 497v-20M232 485l-8 20M330 512l-2-20M672 510l6 50" stroke="#4fb031" stroke-width="5" fill="none"/>
                <path d="M80 75l-22-28M160 88l-13-43M245 100v-27M370 100l-6-30M330 512l-6 45M222 505l-9 35M62 348H20M65 238l-35-10M58 293H30M58 370H18M800 348h27" stroke="#cfe6f5" stroke-width="2.500" fill="none"/>
                <path d="M53 42h10v10H53zM142 40h10v10h-10zM245 68h10v10h-10zM359 65h10v10h-10zM208 535h10v10h-10zM319 552h10v10h-10zM25 223h10v10H25zM32 243h10v10H32zM25 285h10v10H25zM15 340h10v10H15zM13 371h10v10H13zM822 345h10v10h-10z" fill="none" stroke="#dcecf7" stroke-width="2.500"/>
                <path d="M535 135V72M520 115V85" stroke="#c24a90" stroke-width="2.500"/>
                <path d="M529 67h10v10h-10zM512 80h10v10h-10z" fill="none" stroke="#c24a90" stroke-width="2.500"/>
                <path d="M645 135V97M695 138V93" stroke="#d4564a" stroke-width="2.500"/>
                <path d="M634 92h10v10h-10zM687 88h10v10h-10zM662 575h10v10h-10z" fill="none" stroke="#d4564a" stroke-width="2.500"/>
              </g>
              <path d="M1110 335v18l4-4 3.500 7 3-1.500-3.500-6.500h5.500z" fill="#111"/>
              <path d="M1122.500 350.500h11v9h-11z" fill="none" stroke="#444" stroke-dasharray="1 1"/>
            </svg>
          </div>
          <div class="cd-vscroll d-flex flex-column align-items-center">
            <span class="cd-arrow-u"></span>
            <span class="cd-vthumb d-flex align-items-center justify-content-center">&#8801;</span>
            <span class="cd-arrow-d"></span>
          </div>
        </div>
        <div class="cd-page-row d-flex align-items-center">
          <span class="cd-pg-left d-flex align-items-center justify-content-center"></span>
          <span class="cd-pg-ic"><svg class="cd-ic"><use href="#x-pgadd"/></svg></span>
          <span class="cd-pg-ic"><svg class="cd-ic"><use href="#x-first"/></svg></span>
          <span class="cd-pg-ic"><svg class="cd-ic"><use href="#x-prev"/></svg></span>
          <span class="cd-pg-count">1 of 2</span>
          <span class="cd-pg-ic"><svg class="cd-ic"><use href="#x-next"/></svg></span>
          <span class="cd-pg-ic"><svg class="cd-ic"><use href="#x-last"/></svg></span>
          <span class="cd-pg-ic"><svg class="cd-ic"><use href="#x-pgadd"/></svg></span>
          <span class="cd-pg-tab cd-pg-t1">Page 1</span>
          <span class="cd-pg-tab cd-pg-t2">Page 2</span>
          <div class="cd-hscroll d-flex align-items-center">
            <span class="cd-arrow-l"></span>
            <span class="cd-hthumb">&#8214;&#8214;</span>
            <span class="cd-arrow-r"></span>
            <svg class="cd-ic cd-zoom-btn"><use href="#x-zplus"/></svg>
          </div>
        </div>
        <div class="cd-pal-row d-flex align-items-center">
          <div class="cd-pal-head d-flex align-items-center">
            <svg class="cd-ic"><use href="#x-next"/></svg>
            <svg class="cd-ic"><use href="#x-eye"/></svg>
          </div>
          <svg class="cd-ic"><use href="#x-x"/></svg>
          <span class="cd-sw cd-c1"></span><span class="cd-sw cd-c2"></span><span class="cd-sw cd-c3"></span><span class="cd-sw cd-c4"></span><span class="cd-sw cd-c5"></span><span class="cd-sw cd-c6"></span><span class="cd-sw cd-c7"></span><span class="cd-sw cd-c8"></span><span class="cd-sw cd-c9"></span><span class="cd-sw cd-c10"></span><span class="cd-sw cd-c11"></span>
          <div class="cd-pal-fill d-flex align-items-center"><span class="cd-chev">&#8250;</span><span class="cd-chev">&#187;</span></div>
        </div>
      </div>

      <div class="cd-dock d-flex flex-column align-items-stretch">
        <span class="cd-dock-x d-flex align-items-center justify-content-center">&#10005;</span>
        <div class="cd-dtab cd-dt1"><svg class="cd-ic"><use href="#x-hint"/></svg><span>Hints</span></div>
        <div class="cd-dtab cd-dt2"><svg class="cd-ic"><use href="#x-props"/></svg><span>Object Properties</span></div>
        <div class="cd-dtab cd-dt3"><svg class="cd-ic"><use href="#x-mana"/></svg><span>Object Mana...</span></div>
        <div class="cd-dtab cd-dt4"><svg class="cd-ic"><use href="#x-grab"/></svg></div>
        <div class="cd-dtab cd-dt5"><svg class="cd-ic"><use href="#x-mask"/></svg><span>Bitmap Color Mask</span></div>
        <div class="cd-dock-plus d-flex justify-content-center"><svg class="cd-ic"><use href="#x-plus"/></svg></div>
      </div>

      <div class="cd-pal d-flex flex-column">
        <div class="cd-pal-top"></div>
        <svg class="cd-pc" viewBox="0 0 11 16" width="11" height="16"><rect x=".5" y=".5" width="10" height="15" fill="#fff" stroke="#555"/><path d="M1 1l9 14M10 1L1 15" stroke="#444"/></svg>
        <span class="cd-pc cd-g1"></span><span class="cd-pc cd-g2"></span><span class="cd-pc cd-g3"></span><span class="cd-pc cd-g4"></span><span class="cd-pc cd-g5"></span><span class="cd-pc cd-g6"></span><span class="cd-pc cd-g7"></span><span class="cd-pc cd-g8"></span><span class="cd-pc cd-g9"></span><span class="cd-pc cd-g10"></span><span class="cd-pc cd-g11"></span><span class="cd-pc cd-g12"></span>
        <span class="cd-pc cd-h1"></span><span class="cd-pc cd-h2"></span><span class="cd-pc cd-h3"></span><span class="cd-pc cd-h4"></span><span class="cd-pc cd-h5"></span><span class="cd-pc cd-h6"></span><span class="cd-pc cd-h7"></span><span class="cd-pc cd-h8"></span><span class="cd-pc cd-h9"></span><span class="cd-pc cd-h10"></span><span class="cd-pc cd-h11"></span><span class="cd-pc cd-h12"></span><span class="cd-pc cd-h13"></span><span class="cd-pc cd-h14"></span><span class="cd-pc cd-h15"></span><span class="cd-pc cd-h16"></span>
      </div>
    </div>

    <div class="cd-status d-flex align-items-center">
      <span class="cd-coords">(130.134, 74.870 )</span>
      <span class="cd-playbox"><svg class="cd-ic"><use href="#x-next"/></svg></span>
      <span class="cd-curve">Curve: 142 Nodes</span>
      <svg class="cd-ic cd-st-ic"><use href="#x-screen"/></svg>
      <svg class="cd-ic cd-st-ic cd-fillic"><use href="#x-bucket"/></svg>
      <span class="cd-orange"></span>
      <span class="cd-rgb">R:245 G:134 B:51 (#F58633)</span>
      <span class="cd-st-sep"></span>
      <svg class="cd-ic cd-st-ic"><use href="#x-pen"/></svg>
      <svg class="cd-xbox"><use href="#x-x"/></svg>
      <span>None</span>
    </div>
  </div>
  <div class="cd-black-bot"></div>
</div>
</body>
</html>
